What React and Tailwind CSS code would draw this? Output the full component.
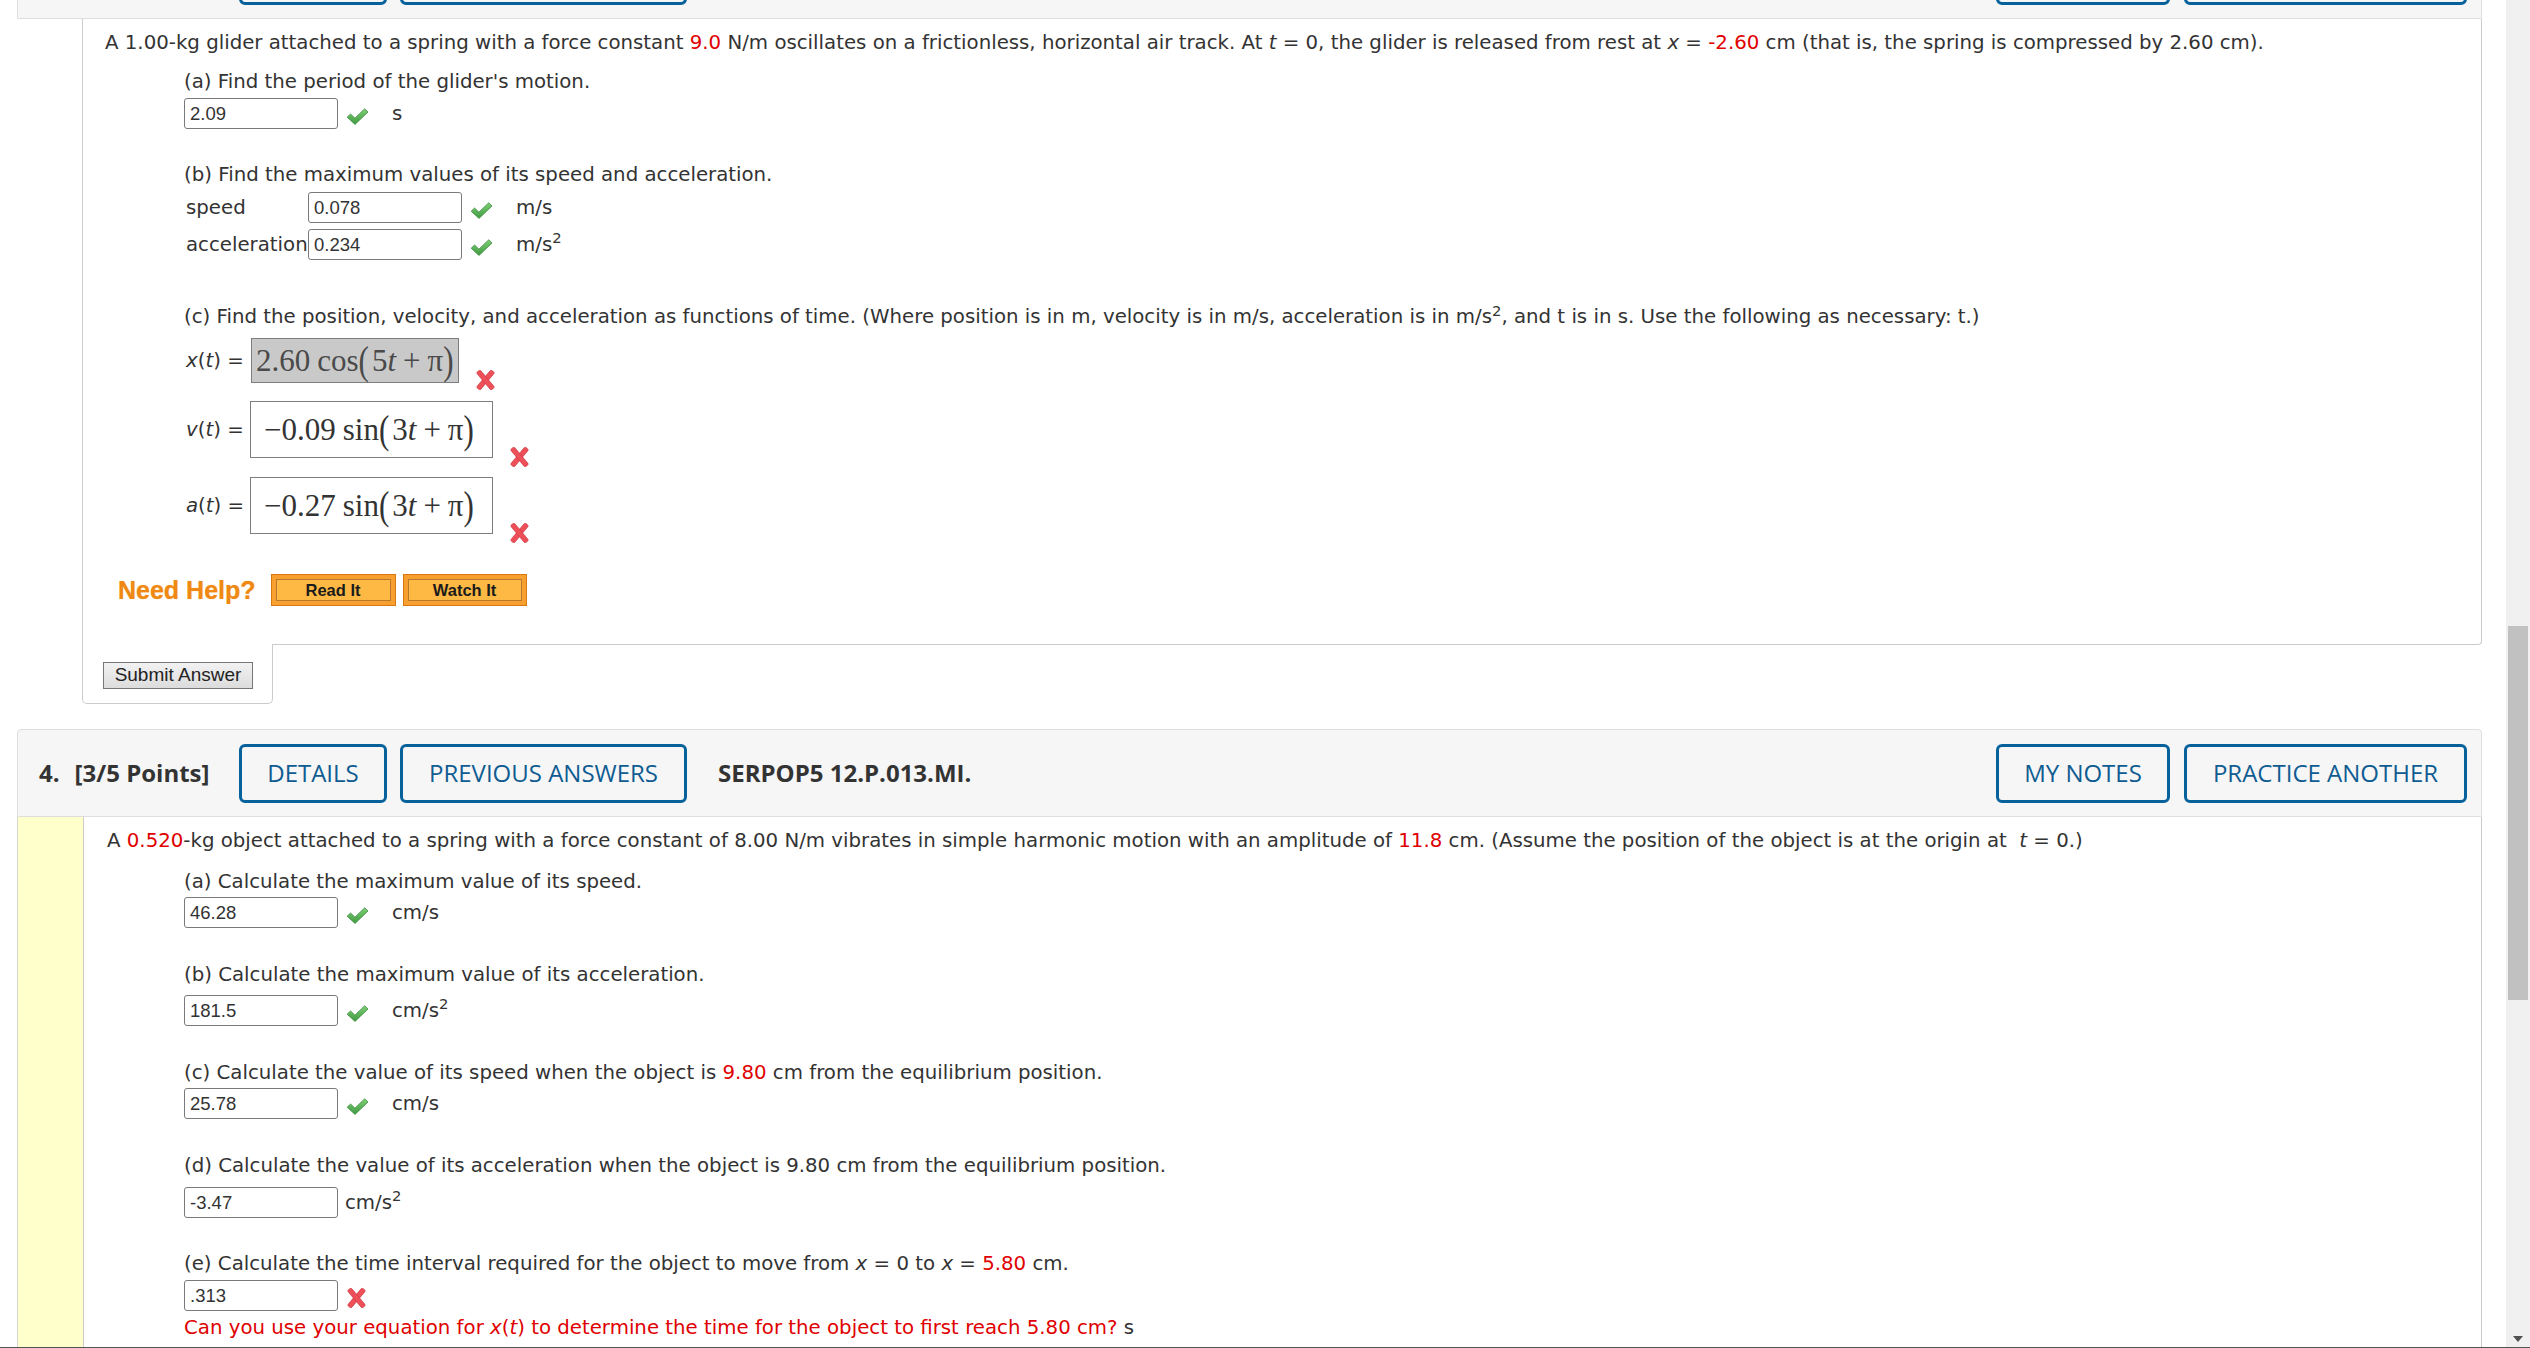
import React from "react";

const bodyText = "font-['DejaVu_Sans',sans-serif] text-[19.75px] leading-[30px] text-[#333]";

function Red({ children }) {
  return <span className="text-[#e00000]">{children}</span>;
}

function Check({ className = "" }) {
  return (
    <svg className={className} width="23" height="19" viewBox="0 0 24 19">
      <defs>
        <linearGradient id="chk" x1="0" y1="0" x2="0" y2="1">
          <stop offset="0" stopColor="#7fcf72" />
          <stop offset="1" stopColor="#3f9a43" />
        </linearGradient>
      </defs>
      <path
        d="M1.2 10.2 L4.8 6.9 L9.3 11.2 L19.6 1.4 L23 4.8 L9.4 17.8 Z"
        fill="url(#chk)"
        stroke="#3b8a3e"
        strokeWidth="0.8"
        strokeLinejoin="round"
      />
    </svg>
  );
}

function Cross({ className = "" }) {
  return (
    <svg className={className} width="21" height="20" viewBox="0 0 20 20">
      <g fill="#ee5059" stroke="#cc3a44" strokeWidth="0.6">
        <rect x="7.6" y="-1.5" width="4.8" height="23" rx="1.6" transform="rotate(40 10 10)" />
        <rect x="7.6" y="-1.5" width="4.8" height="23" rx="1.6" transform="rotate(-40 10 10)" />
      </g>
    </svg>
  );
}

function Box({ value }) {
  return (
    <div className="flex h-[31px] w-[154px] shrink-0 items-center rounded-[3px] border border-[#7a7a7a] bg-white pl-[5px] font-['Liberation_Sans',Arial,sans-serif] text-[18.5px] text-[#333]">
      {value}
    </div>
  );
}

function Answer({ value, status, unit, className = "" }) {
  return (
    <div className={`flex h-[31px] items-center ${className}`}>
      <Box value={value} />
      {status === "ok" && <Check className="ml-[8px] mt-[6px] shrink-0" />}
      {status === "bad" && <Cross className="ml-[8px] mt-[4px] shrink-0" />}
      {unit && <span className={status ? "ml-[23px]" : "ml-[7px]"}>{unit}</span>}
    </div>
  );
}

function HeaderButton({ className = "", children }) {
  return (
    <div
      className={`flex h-[59px] shrink-0 items-center justify-center rounded-[6px] border-[3px] border-[#07629c] text-[#0f5c92] ${className}`}
    >
      {children}
    </div>
  );
}

// bare: the header of the question above, scrolled mostly out of view, so no labels
function QuestionHeader({ num, points, code, bare = false, className = "" }) {
  return (
    <div
      className={`flex h-[88px] items-center rounded-t-[4px] border border-[#dedede] bg-[#f6f6f6] pl-[21px] pr-[14px] font-['Open_Sans',sans-serif] text-[24px] ${className}`}
    >
      <div className="flex w-[200px] shrink-0 font-bold text-[#333]">
        {!bare && (
          <>
            <span>{num}.</span>
            <span className="ml-[15px]">[{points} Points]</span>
          </>
        )}
      </div>
      <HeaderButton className="w-[148px]">{!bare && "DETAILS"}</HeaderButton>
      <HeaderButton className="ml-[13px] w-[287px]">{!bare && "PREVIOUS ANSWERS"}</HeaderButton>
      {!bare && <span className="ml-[31px] font-bold text-[#333]">{code}</span>}
      <HeaderButton className="ml-auto w-[174px]">{!bare && "MY NOTES"}</HeaderButton>
      <HeaderButton className="ml-[14px] w-[283px]">{!bare && "PRACTICE ANOTHER"}</HeaderButton>
    </div>
  );
}

function Paren({ children }) {
  return <span className="inline-block scale-y-[1.28] font-light">{children}</span>;
}

function MathExpr({ coef, fn, k }) {
  return (
    <span className="flex items-center font-['Liberation_Serif',serif] text-[31px] leading-none">
      <span>{coef}</span>
      <span className="ml-[7px]">{fn}</span>
      <Paren>(</Paren>
      <span className="ml-[3px]">{k}</span>
      <span className="italic">t</span>
      <span className="mx-[7px]">+</span>
      <span>π</span>
      <Paren>)</Paren>
    </span>
  );
}

function HelpButton({ className = "", children }) {
  return (
    <div className={`h-[32px] border border-[#d9780e] bg-[#f7a02f] p-[4px] ${className}`}>
      <div className="flex h-full items-center justify-center border border-[#b9792c] bg-[#fdb944] font-['Liberation_Sans',Arial,sans-serif] text-[16.5px] font-bold text-[#1b1b1b]">
        {children}
      </div>
    </div>
  );
}

function QuestionThree() {
  return (
    <>
      <QuestionHeader bare className="-mt-[69px]" />
      <div className={`ml-[65px] rounded-br-[4px] border-x border-b border-[#cbcbcb] pb-[38px] pl-[22px] pt-[9px] ${bodyText}`}>
        <p className="whitespace-nowrap">
          A 1.00-kg glider attached to a spring with a force constant <Red>9.0</Red> N/m oscillates on a frictionless,
          horizontal air track. At <i>t</i> = 0, the glider is released from rest at <i>x</i> = <Red>-2.60</Red> cm (that is,
          the spring is compressed by 2.60 cm).
        </p>

        <div className="ml-[79px]">
          <p className="mt-[9px]">(a) Find the period of the glider's motion.</p>
          <Answer className="mt-px" value="2.09" status="ok" unit="s" />

          <p className="mt-[31px]">(b) Find the maximum values of its speed and acceleration.</p>
          <div className="mt-[2px] flex flex-col gap-[6px]">
            <div className="flex h-[31px] items-center">
              <span className="w-[124px] shrink-0 pl-[2px]">speed</span>
              <Answer value="0.078" status="ok" unit="m/s" />
            </div>
            <div className="flex h-[31px] items-center">
              <span className="w-[124px] shrink-0 pl-[2px]">acceleration</span>
              <Answer
                value="0.234"
                status="ok"
                unit={
                  <>
                    m/s<sup>2</sup>
                  </>
                }
              />
            </div>
          </div>

          <p className="mt-[42px] whitespace-nowrap">
            (c) Find the position, velocity, and acceleration as functions of time. (Where position is in m, velocity is in
            m/s, acceleration is in m/s<sup>2</sup>, and t is in s. Use the following as necessary: t.)
          </p>

          <div className="mt-[6px] flex items-end">
            <span className="flex h-[45px] w-[67px] shrink-0 items-center self-start pl-[2px]">
              <i>x</i>(<i>t</i>) =
            </span>
            <div className="flex h-[45px] w-[208px] items-center border border-[#7d7d7d] bg-[#c9c9c9] pl-[4px] text-[#4a4a4a]">
              <MathExpr coef="2.60" fn="cos" k="5" />
            </div>
            <Cross className="ml-[16px] translate-y-[7px]" />
          </div>

          <div className="mt-[18px] flex items-end">
            <span className="flex h-[57px] w-[66px] shrink-0 items-center self-start pl-[2px]">
              <i>v</i>(<i>t</i>) =
            </span>
            <div className="flex h-[57px] w-[243px] items-center border border-[#7d7d7d] bg-white pl-[13px] text-[#333]">
              <MathExpr coef="−0.09" fn="sin" k="3" />
            </div>
            <Cross className="ml-[16px] translate-y-[9px]" />
          </div>

          <div className="mt-[19px] flex items-end">
            <span className="flex h-[57px] w-[66px] shrink-0 items-center self-start pl-[2px]">
              <i>a</i>(<i>t</i>) =
            </span>
            <div className="flex h-[57px] w-[243px] items-center border border-[#7d7d7d] bg-white pl-[13px] text-[#333]">
              <MathExpr coef="−0.27" fn="sin" k="3" />
            </div>
            <Cross className="ml-[16px] translate-y-[9px]" />
          </div>
        </div>

        <div className="ml-[13px] mt-[40px] flex h-[32px] items-center">
          <span className="font-['Liberation_Sans',Arial,sans-serif] text-[25px] font-bold text-[#ef8914] [text-shadow:0_0_1px_#f6b56a]">
            Need Help?
          </span>
          <HelpButton className="ml-[15px] w-[125px]">Read It</HelpButton>
          <HelpButton className="ml-[7px] w-[124px]">Watch It</HelpButton>
        </div>
      </div>

      <div className="relative -mt-px ml-[65px] w-[191px] rounded-b-[5px] border-x border-b border-[#cbcbcb] bg-white pb-[14px] pl-[20px] pt-[18px]">
        <div className="flex h-[27px] w-[150px] items-center justify-center border border-[#767676] bg-gradient-to-b from-[#f2f2f2] to-[#dcdcdc] font-['Liberation_Sans',Arial,sans-serif] text-[19px] text-[#222]">
          Submit Answer
        </div>
      </div>
    </>
  );
}

function QuestionFour() {
  return (
    <>
      <QuestionHeader num="4" points="3/5" code="SERPOP5 12.P.013.MI." className="mt-[25px]" />
      <div className="flex h-[700px] border-l border-[#d6d6d6]">
        <div className="w-[65px] shrink-0 bg-[#ffffcc]" />
        <div className={`flex-1 border-x border-[#cbcbcb] pl-[23px] pt-[9px] ${bodyText}`}>
          <p className="whitespace-nowrap">
            A <Red>0.520</Red>-kg object attached to a spring with a force constant of 8.00 N/m vibrates in simple
            harmonic motion with an amplitude of <Red>11.8</Red> cm. (Assume the position of the object is at the origin
            at{"\u00a0 "}
            <i>t</i> = 0.)
          </p>

          <div className="ml-[77px]">
            <p className="mt-[11px]">(a) Calculate the maximum value of its speed.</p>
            <Answer value="46.28" status="ok" unit="cm/s" />

            <p className="mt-[32px]">(b) Calculate the maximum value of its acceleration.</p>
            <Answer
              className="mt-[5px]"
              value="181.5"
              status="ok"
              unit={
                <>
                  cm/s<sup>2</sup>
                </>
              }
            />

            <p className="mt-[32px]">
              (c) Calculate the value of its speed when the object is <Red>9.80</Red> cm from the equilibrium position.
            </p>
            <Answer value="25.78" status="ok" unit="cm/s" />

            <p className="mt-[32px]">
              (d) Calculate the value of its acceleration when the object is 9.80 cm from the equilibrium position.
            </p>
            <Answer
              className="mt-[6px]"
              value="-3.47"
              unit={
                <>
                  cm/s<sup>2</sup>
                </>
              }
            />

            <p className="mt-[31px]">
              (e) Calculate the time interval required for the object to move from <i>x</i> = 0 to <i>x</i> ={" "}
              <Red>5.80</Red> cm.
            </p>
            <Answer className="mt-px" value=".313" status="bad" />
            <p className="mt-[2px]">
              <Red>
                Can you use your equation for <i>x</i>(<i>t</i>) to determine the time for the object to first reach 5.80
                cm?
              </Red>{" "}
              s
            </p>
          </div>
        </div>
      </div>
    </>
  );
}

export default function App() {
  return (
    <div className="flex h-[1348px] w-[2530px] flex-col overflow-hidden bg-white">
      <div className="flex min-h-0 flex-1">
        <main className="min-w-0 flex-1 overflow-hidden pl-[17px] pr-[24px]">
          <QuestionThree />
          <QuestionFour />
        </main>
        <div className="flex w-[24px] shrink-0 flex-col bg-[#f0f0f0]">
          <div className="mx-[2px] mt-[626px] h-[374px] bg-[#c1c1c1]" />
          <div className="mt-auto flex justify-center pb-[5px]">
            <svg width="10" height="6" viewBox="0 0 10 6">
              <path d="M0 0 L10 0 L5 6 Z" fill="#505050" />
            </svg>
          </div>
        </div>
      </div>
      <div className="h-px bg-[#555]" />
    </div>
  );
}
